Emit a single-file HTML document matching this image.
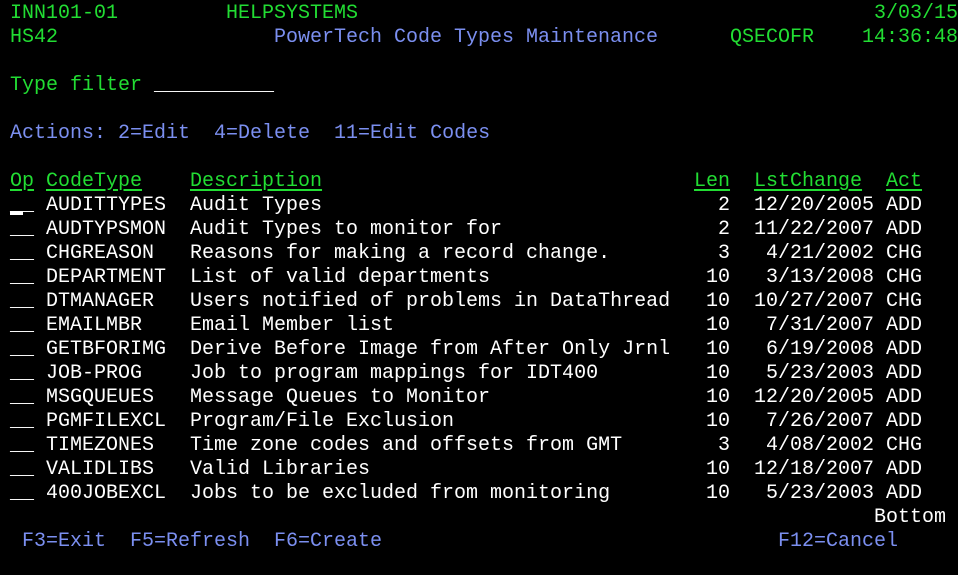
<!DOCTYPE html>
<html><head><meta charset="utf-8"><style>
html,body{margin:0;padding:0;background:#000;}
body{width:958px;height:575px;overflow:hidden;position:relative;font-family:"Liberation Mono","DejaVu Sans Mono",monospace;font-size:20px;}
#w{position:absolute;left:0;top:2px;width:958px;height:573px;}
.r{position:absolute;left:0;height:24px;width:958px;line-height:24px;}
.r span{position:absolute;white-space:pre;top:0;}
.g{color:#22dd33;}
.b{color:#7b8ff0;}
.w{color:#fff;}
.u{text-decoration:underline;text-underline-offset:3px;text-decoration-thickness:2px;}
.len{width:24px;text-align:right;}
.dt{width:120px;text-align:right;}
.cur{position:absolute;left:10px;top:211px;width:13px;height:4px;background:#fff;}
</style></head><body>
<div id="w">
<div class="r g" style="top:0"><span style="left:10px">INN101-01</span><span style="left:226px">HELPSYSTEMS</span><span style="left:874px">3/03/15</span></div>
<div class="r" style="top:24px"><span class="g" style="left:10px">HS42</span><span class="b" style="left:274px">PowerTech Code Types Maintenance</span><span class="g" style="left:730px">QSECOFR</span><span class="g" style="left:862px">14:36:48</span></div>
<div class="r" style="top:72px"><span class="g" style="left:10px">Type filter</span><span class="w" style="left:154px">__________</span></div>
<div class="r b" style="top:120px"><span style="left:10px">Actions: 2=Edit  4=Delete  11=Edit Codes</span></div>
<div class="r g" style="top:168px"><span class="u" style="left:10px">Op</span><span class="u" style="left:46px">CodeType</span><span class="u" style="left:190px">Description</span><span class="u" style="left:694px">Len</span><span class="u" style="left:754px">LstChange</span><span class="u" style="left:886px">Act</span></div>

<div class="r w" style="top:192px"><span style="left:10px">__</span><span style="left:46px">AUDITTYPES</span><span style="left:190px">Audit Types</span><span class="len" style="left:706px">2</span><span class="dt" style="left:754px">12/20/2005</span><span style="left:886px">ADD</span></div>
<div class="r w" style="top:216px"><span style="left:10px">__</span><span style="left:46px">AUDTYPSMON</span><span style="left:190px">Audit Types to monitor for</span><span class="len" style="left:706px">2</span><span class="dt" style="left:754px">11/22/2007</span><span style="left:886px">ADD</span></div>
<div class="r w" style="top:240px"><span style="left:10px">__</span><span style="left:46px">CHGREASON</span><span style="left:190px">Reasons for making a record change.</span><span class="len" style="left:706px">3</span><span class="dt" style="left:754px">4/21/2002</span><span style="left:886px">CHG</span></div>
<div class="r w" style="top:264px"><span style="left:10px">__</span><span style="left:46px">DEPARTMENT</span><span style="left:190px">List of valid departments</span><span class="len" style="left:706px">10</span><span class="dt" style="left:754px">3/13/2008</span><span style="left:886px">CHG</span></div>
<div class="r w" style="top:288px"><span style="left:10px">__</span><span style="left:46px">DTMANAGER</span><span style="left:190px">Users notified of problems in DataThread</span><span class="len" style="left:706px">10</span><span class="dt" style="left:754px">10/27/2007</span><span style="left:886px">CHG</span></div>
<div class="r w" style="top:312px"><span style="left:10px">__</span><span style="left:46px">EMAILMBR</span><span style="left:190px">Email Member list</span><span class="len" style="left:706px">10</span><span class="dt" style="left:754px">7/31/2007</span><span style="left:886px">ADD</span></div>
<div class="r w" style="top:336px"><span style="left:10px">__</span><span style="left:46px">GETBFORIMG</span><span style="left:190px">Derive Before Image from After Only Jrnl</span><span class="len" style="left:706px">10</span><span class="dt" style="left:754px">6/19/2008</span><span style="left:886px">ADD</span></div>
<div class="r w" style="top:360px"><span style="left:10px">__</span><span style="left:46px">JOB-PROG</span><span style="left:190px">Job to program mappings for IDT400</span><span class="len" style="left:706px">10</span><span class="dt" style="left:754px">5/23/2003</span><span style="left:886px">ADD</span></div>
<div class="r w" style="top:384px"><span style="left:10px">__</span><span style="left:46px">MSGQUEUES</span><span style="left:190px">Message Queues to Monitor</span><span class="len" style="left:706px">10</span><span class="dt" style="left:754px">12/20/2005</span><span style="left:886px">ADD</span></div>
<div class="r w" style="top:408px"><span style="left:10px">__</span><span style="left:46px">PGMFILEXCL</span><span style="left:190px">Program/File Exclusion</span><span class="len" style="left:706px">10</span><span class="dt" style="left:754px">7/26/2007</span><span style="left:886px">ADD</span></div>
<div class="r w" style="top:432px"><span style="left:10px">__</span><span style="left:46px">TIMEZONES</span><span style="left:190px">Time zone codes and offsets from GMT</span><span class="len" style="left:706px">3</span><span class="dt" style="left:754px">4/08/2002</span><span style="left:886px">CHG</span></div>
<div class="r w" style="top:456px"><span style="left:10px">__</span><span style="left:46px">VALIDLIBS</span><span style="left:190px">Valid Libraries</span><span class="len" style="left:706px">10</span><span class="dt" style="left:754px">12/18/2007</span><span style="left:886px">ADD</span></div>
<div class="r w" style="top:480px"><span style="left:10px">__</span><span style="left:46px">400JOBEXCL</span><span style="left:190px">Jobs to be excluded from monitoring</span><span class="len" style="left:706px">10</span><span class="dt" style="left:754px">5/23/2003</span><span style="left:886px">ADD</span></div>
<div class="r w" style="top:504px"><span style="left:874px">Bottom</span></div>
<div class="r b" style="top:528px"><span style="left:22px">F3=Exit</span><span style="left:130px">F5=Refresh</span><span style="left:274px">F6=Create</span><span style="left:778px">F12=Cancel</span></div>
</div>
<div class="cur"></div>
</body></html>
